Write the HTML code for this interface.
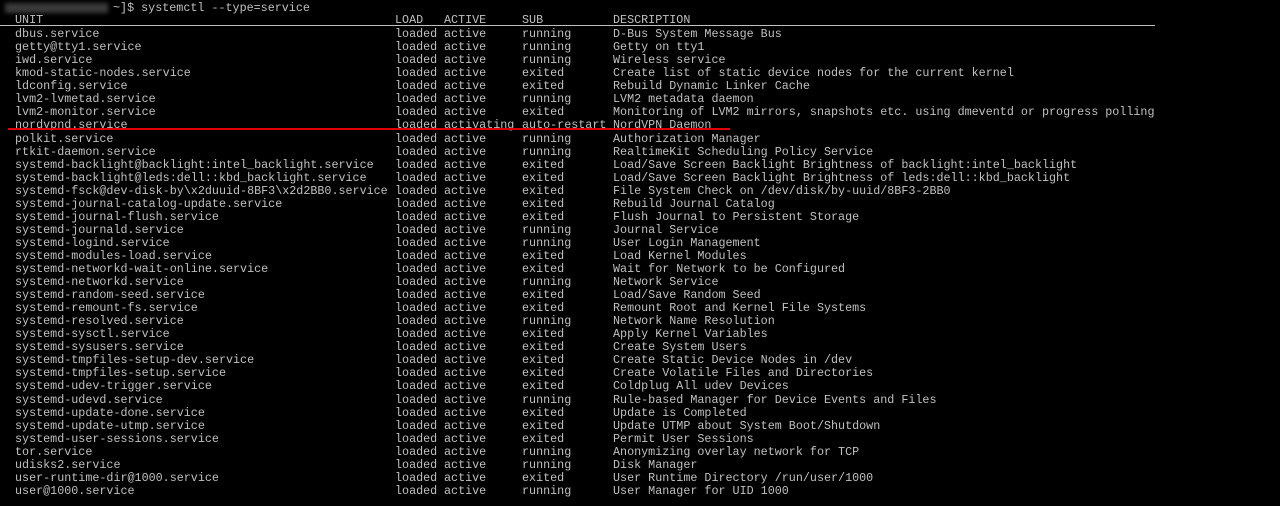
<!DOCTYPE html>
<html><head><meta charset="utf-8"><style>
body{margin:0;background:#000;width:1280px;height:504px;overflow:hidden;position:relative;font-family:"Liberation Mono",monospace;font-size:11.73px;color:#c0c0c0}
#w{position:absolute;left:0;top:2px;width:1280px;height:504px}
.r{position:absolute;left:0;height:13px;line-height:13px;width:1280px;white-space:pre}
.r b{font-weight:normal;position:absolute;top:0}
.a{left:15px}.l{left:395px}.c{left:444px}.s{left:522px}.d{left:613px}
.hd{border-bottom:1px solid #c0c0c0;width:1155px}
.blur{position:absolute;left:5px;top:1px;width:103px;height:10px;background:#3a3a3a;filter:blur(2px)}
.red{position:absolute;left:8px;top:128px;width:722px;height:2px;background:#e00000}
</style></head><body>
<div id="w">
<div class="blur"></div>
<div class="r" style="top:0"><b style="left:113px">~]$ systemctl --type=service</b></div>
<div class="r hd" style="top:12px;height:11px"><b class="a">UNIT</b><b class="l">LOAD</b><b class="c">ACTIVE</b><b class="s">SUB</b><b class="d">DESCRIPTION</b></div>
<div class="r" style="top:26.1px"><b class="a">dbus.service</b><b class="l">loaded</b><b class="c">active</b><b class="s">running</b><b class="d">D-Bus System Message Bus</b></div>
<div class="r" style="top:39.15px"><b class="a">getty@tty1.service</b><b class="l">loaded</b><b class="c">active</b><b class="s">running</b><b class="d">Getty on tty1</b></div>
<div class="r" style="top:52.2px"><b class="a">iwd.service</b><b class="l">loaded</b><b class="c">active</b><b class="s">running</b><b class="d">Wireless service</b></div>
<div class="r" style="top:65.25px"><b class="a">kmod-static-nodes.service</b><b class="l">loaded</b><b class="c">active</b><b class="s">exited</b><b class="d">Create list of static device nodes for the current kernel</b></div>
<div class="r" style="top:78.3px"><b class="a">ldconfig.service</b><b class="l">loaded</b><b class="c">active</b><b class="s">exited</b><b class="d">Rebuild Dynamic Linker Cache</b></div>
<div class="r" style="top:91.35px"><b class="a">lvm2-lvmetad.service</b><b class="l">loaded</b><b class="c">active</b><b class="s">running</b><b class="d">LVM2 metadata daemon</b></div>
<div class="r" style="top:104.4px"><b class="a">lvm2-monitor.service</b><b class="l">loaded</b><b class="c">active</b><b class="s">exited</b><b class="d">Monitoring of LVM2 mirrors, snapshots etc. using dmeventd or progress polling</b></div>
<div class="r" style="top:117.45px"><b class="a">nordvpnd.service</b><b class="l">loaded</b><b class="c">activating</b><b class="s">auto-restart</b><b class="d">NordVPN Daemon</b></div>
<div class="r" style="top:130.5px"><b class="a">polkit.service</b><b class="l">loaded</b><b class="c">active</b><b class="s">running</b><b class="d">Authorization Manager</b></div>
<div class="r" style="top:143.55px"><b class="a">rtkit-daemon.service</b><b class="l">loaded</b><b class="c">active</b><b class="s">running</b><b class="d">RealtimeKit Scheduling Policy Service</b></div>
<div class="r" style="top:156.6px"><b class="a">systemd-backlight@backlight:intel_backlight.service</b><b class="l">loaded</b><b class="c">active</b><b class="s">exited</b><b class="d">Load/Save Screen Backlight Brightness of backlight:intel_backlight</b></div>
<div class="r" style="top:169.65px"><b class="a">systemd-backlight@leds:dell::kbd_backlight.service</b><b class="l">loaded</b><b class="c">active</b><b class="s">exited</b><b class="d">Load/Save Screen Backlight Brightness of leds:dell::kbd_backlight</b></div>
<div class="r" style="top:182.7px"><b class="a">systemd-fsck@dev-disk-by\x2duuid-8BF3\x2d2BB0.service</b><b class="l">loaded</b><b class="c">active</b><b class="s">exited</b><b class="d">File System Check on /dev/disk/by-uuid/8BF3-2BB0</b></div>
<div class="r" style="top:195.75px"><b class="a">systemd-journal-catalog-update.service</b><b class="l">loaded</b><b class="c">active</b><b class="s">exited</b><b class="d">Rebuild Journal Catalog</b></div>
<div class="r" style="top:208.8px"><b class="a">systemd-journal-flush.service</b><b class="l">loaded</b><b class="c">active</b><b class="s">exited</b><b class="d">Flush Journal to Persistent Storage</b></div>
<div class="r" style="top:221.85px"><b class="a">systemd-journald.service</b><b class="l">loaded</b><b class="c">active</b><b class="s">running</b><b class="d">Journal Service</b></div>
<div class="r" style="top:234.9px"><b class="a">systemd-logind.service</b><b class="l">loaded</b><b class="c">active</b><b class="s">running</b><b class="d">User Login Management</b></div>
<div class="r" style="top:247.95px"><b class="a">systemd-modules-load.service</b><b class="l">loaded</b><b class="c">active</b><b class="s">exited</b><b class="d">Load Kernel Modules</b></div>
<div class="r" style="top:261px"><b class="a">systemd-networkd-wait-online.service</b><b class="l">loaded</b><b class="c">active</b><b class="s">exited</b><b class="d">Wait for Network to be Configured</b></div>
<div class="r" style="top:274.05px"><b class="a">systemd-networkd.service</b><b class="l">loaded</b><b class="c">active</b><b class="s">running</b><b class="d">Network Service</b></div>
<div class="r" style="top:287.1px"><b class="a">systemd-random-seed.service</b><b class="l">loaded</b><b class="c">active</b><b class="s">exited</b><b class="d">Load/Save Random Seed</b></div>
<div class="r" style="top:300.15px"><b class="a">systemd-remount-fs.service</b><b class="l">loaded</b><b class="c">active</b><b class="s">exited</b><b class="d">Remount Root and Kernel File Systems</b></div>
<div class="r" style="top:313.2px"><b class="a">systemd-resolved.service</b><b class="l">loaded</b><b class="c">active</b><b class="s">running</b><b class="d">Network Name Resolution</b></div>
<div class="r" style="top:326.25px"><b class="a">systemd-sysctl.service</b><b class="l">loaded</b><b class="c">active</b><b class="s">exited</b><b class="d">Apply Kernel Variables</b></div>
<div class="r" style="top:339.3px"><b class="a">systemd-sysusers.service</b><b class="l">loaded</b><b class="c">active</b><b class="s">exited</b><b class="d">Create System Users</b></div>
<div class="r" style="top:352.35px"><b class="a">systemd-tmpfiles-setup-dev.service</b><b class="l">loaded</b><b class="c">active</b><b class="s">exited</b><b class="d">Create Static Device Nodes in /dev</b></div>
<div class="r" style="top:365.4px"><b class="a">systemd-tmpfiles-setup.service</b><b class="l">loaded</b><b class="c">active</b><b class="s">exited</b><b class="d">Create Volatile Files and Directories</b></div>
<div class="r" style="top:378.45px"><b class="a">systemd-udev-trigger.service</b><b class="l">loaded</b><b class="c">active</b><b class="s">exited</b><b class="d">Coldplug All udev Devices</b></div>
<div class="r" style="top:391.5px"><b class="a">systemd-udevd.service</b><b class="l">loaded</b><b class="c">active</b><b class="s">running</b><b class="d">Rule-based Manager for Device Events and Files</b></div>
<div class="r" style="top:404.55px"><b class="a">systemd-update-done.service</b><b class="l">loaded</b><b class="c">active</b><b class="s">exited</b><b class="d">Update is Completed</b></div>
<div class="r" style="top:417.6px"><b class="a">systemd-update-utmp.service</b><b class="l">loaded</b><b class="c">active</b><b class="s">exited</b><b class="d">Update UTMP about System Boot/Shutdown</b></div>
<div class="r" style="top:430.65px"><b class="a">systemd-user-sessions.service</b><b class="l">loaded</b><b class="c">active</b><b class="s">exited</b><b class="d">Permit User Sessions</b></div>
<div class="r" style="top:443.7px"><b class="a">tor.service</b><b class="l">loaded</b><b class="c">active</b><b class="s">running</b><b class="d">Anonymizing overlay network for TCP</b></div>
<div class="r" style="top:456.75px"><b class="a">udisks2.service</b><b class="l">loaded</b><b class="c">active</b><b class="s">running</b><b class="d">Disk Manager</b></div>
<div class="r" style="top:469.8px"><b class="a">user-runtime-dir@1000.service</b><b class="l">loaded</b><b class="c">active</b><b class="s">exited</b><b class="d">User Runtime Directory /run/user/1000</b></div>
<div class="r" style="top:482.85px"><b class="a">user@1000.service</b><b class="l">loaded</b><b class="c">active</b><b class="s">running</b><b class="d">User Manager for UID 1000</b></div>
</div>
<div class="red"></div>
</body></html>
